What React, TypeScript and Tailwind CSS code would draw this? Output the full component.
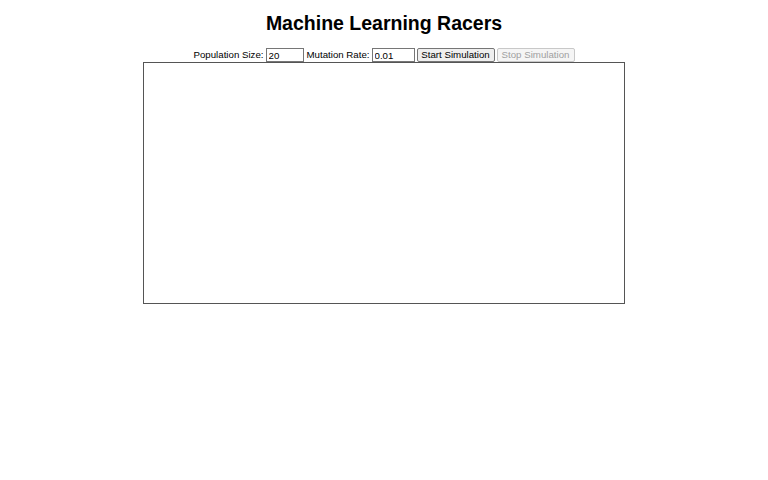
export default function App() {
  return (
    <div className="min-h-screen bg-white font-['Liberation_Sans',Arial,sans-serif] text-black">
      <h1 className="pt-[11px] text-center text-[19.5px] font-bold leading-[24px]">
        Machine Learning Racers
      </h1>

      <div className="mt-[13px] flex items-center justify-center text-[9.7px] leading-[12px]">
        <label className="flex items-center">
          Population Size:
          <input
            type="number"
            defaultValue={20}
            className="ml-[2px] h-[14px] w-[38px] border border-[#767676] px-[2px] text-[9.7px] [appearance:textfield]"
          />
        </label>
        <label className="ml-[3px] flex items-center">
          Mutation Rate:
          <input
            type="number"
            defaultValue={0.01}
            className="ml-[2px] h-[14px] w-[43px] border border-[#767676] px-[2px] text-[9.7px] [appearance:textfield]"
          />
        </label>
        <button className="ml-[2px] h-[14px] w-[78px] rounded-[2px] border border-[#767676] bg-[#efefef] text-[9.7px] leading-[12px]">
          Start Simulation
        </button>
        <button
          disabled
          className="ml-[2px] h-[14px] w-[78px] rounded-[2px] border border-[#c8c8c8] bg-[#f5f5f5] text-[9.7px] leading-[12px] text-[#a0a0a0]"
        >
          Stop Simulation
        </button>
      </div>

      <div className="flex justify-center">
        <canvas width={480} height={240} className="border border-[#555]" />
      </div>
    </div>
  );
}
